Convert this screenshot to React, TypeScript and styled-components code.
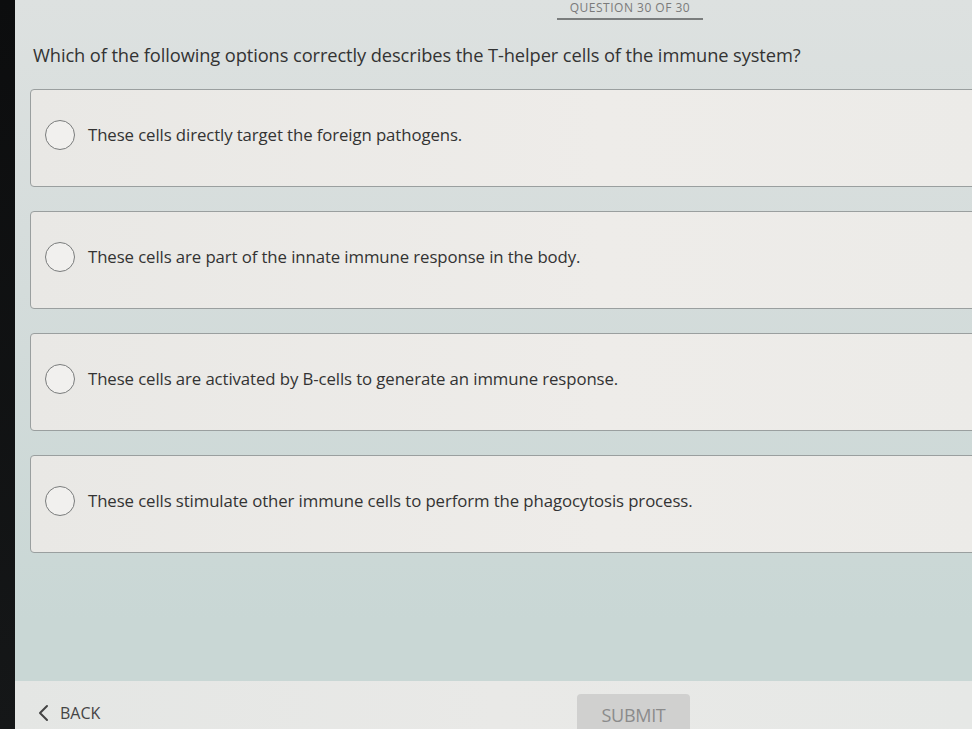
import styled, { createGlobalStyle } from "styled-components";

const GlobalStyle = createGlobalStyle`
    html, body {
        margin: 0;
        padding: 0;
        height: 100%;
        overflow: hidden;
    }
    body {
        font-family: "Open Sans", "Liberation Sans", sans-serif;
        color: #333;
    }
`;

const options = [
    "These cells directly target the foreign pathogens.",
    "These cells are part of the innate immune response in the body.",
    "These cells are activated by B-cells to generate an immune response.",
    "These cells stimulate other immune cells to perform the phagocytosis process.",
];

export default function App() {
    return (
        <>
            <GlobalStyle />
            <Screen>
                <Bezel />
                <Page>
                    <Header>
                        <Counter>Question 30 of 30</Counter>
                    </Header>
                    <Question>
                        Which of the following options correctly describes the T-helper cells of the immune system?
                    </Question>
                    <OptionList>
                        {options.map((text) => (
                            <Option key={text}>
                                <Radio />
                                <OptionText>{text}</OptionText>
                            </Option>
                        ))}
                    </OptionList>
                    <Spacer />
                    <Footer>
                        <BackButton>
                            <svg width="14" height="18" viewBox="0 0 14 18" fill="none">
                                <path d="M10 2 L3 9 L10 16" stroke="#444" strokeWidth="2" strokeLinecap="round" strokeLinejoin="round" />
                            </svg>
                            BACK
                        </BackButton>
                        <SubmitButton disabled>SUBMIT</SubmitButton>
                    </Footer>
                </Page>
            </Screen>
        </>
    );
}

const Screen = styled.div`
    display: flex;
    width: 100vw;
    height: 100vh;
    overflow: hidden;
`;

const Bezel = styled.div`
    width: 15px;
    flex-shrink: 0;
    background: linear-gradient(180deg, #0c0d0e, #151718);
`;

const Page = styled.div`
    flex: 1;
    display: flex;
    flex-direction: column;
    background: linear-gradient(180deg, #dde1e0 0%, #d4dcdb 40%, #c9d7d5 85%);
    overflow: hidden;
`;

const Header = styled.div`
    height: 20px;
    padding-left: 542px;
    display: flex;
    align-items: flex-end;
`;

const Counter = styled.div`
    width: 146px;
    text-align: center;
    font-size: 12px;
    line-height: 14px;
    text-transform: uppercase;
    letter-spacing: 0.5px;
    color: #7a7a7a;
    border-bottom: 2px solid #7a7d7d;
    padding-bottom: 3px;
`;

const Question = styled.h2`
    margin: 23px 0 0 18px;
    font-size: 18.3px;
    font-weight: 400;
    line-height: 24px;
    color: #333;
    letter-spacing: -0.1px;
`;

const OptionList = styled.div`
    display: flex;
    flex-direction: column;
    gap: 24px;
    margin: 22px -12px 0 15px;
`;

const Option = styled.div`
    height: 98px;
    box-sizing: border-box;
    display: flex;
    align-items: center;
    gap: 13px;
    padding: 0 0 7px 14px;
    background: linear-gradient(90deg, #e9e8e5, #eeece9 60%, #ecebe8);
    border: 1.5px solid #9a9f9f;
    border-radius: 4px;
`;

const Radio = styled.div`
    width: 30px;
    height: 30px;
    box-sizing: border-box;
    border-radius: 50%;
    border: 1.5px solid #7a7c7c;
    background: #f1f0ee;
    flex-shrink: 0;
`;

const OptionText = styled.span`
    font-size: 16.8px;
    color: #333;
    letter-spacing: -0.1px;
`;

const Spacer = styled.div`
    flex: 1;
`;

const Footer = styled.div`
    height: 48px;
    display: flex;
    align-items: flex-end;
    background: linear-gradient(90deg, #e4e6e4, #e9e9e7 50%, #e6e8e6);
    padding-left: 22px;
`;

const BackButton = styled.button`
    display: flex;
    align-items: center;
    gap: 9px;
    border: none;
    background: none;
    padding: 0;
    margin-bottom: 5px;
    font-family: "Open Sans", "Liberation Sans", sans-serif;
    font-size: 16px;
    color: #444;
    width: 100px;
`;

const SubmitButton = styled.button`
    margin-left: 440px;
    width: 113px;
    height: 36px;
    margin-bottom: -1px;
    border: none;
    border-radius: 4px 4px 0 0;
    background: #d0d0cf;
    font-family: "Open Sans", "Liberation Sans", sans-serif;
    font-size: 18px;
    letter-spacing: -0.3px;
    color: #8b8b8b;
    padding-top: 6px;
`;
